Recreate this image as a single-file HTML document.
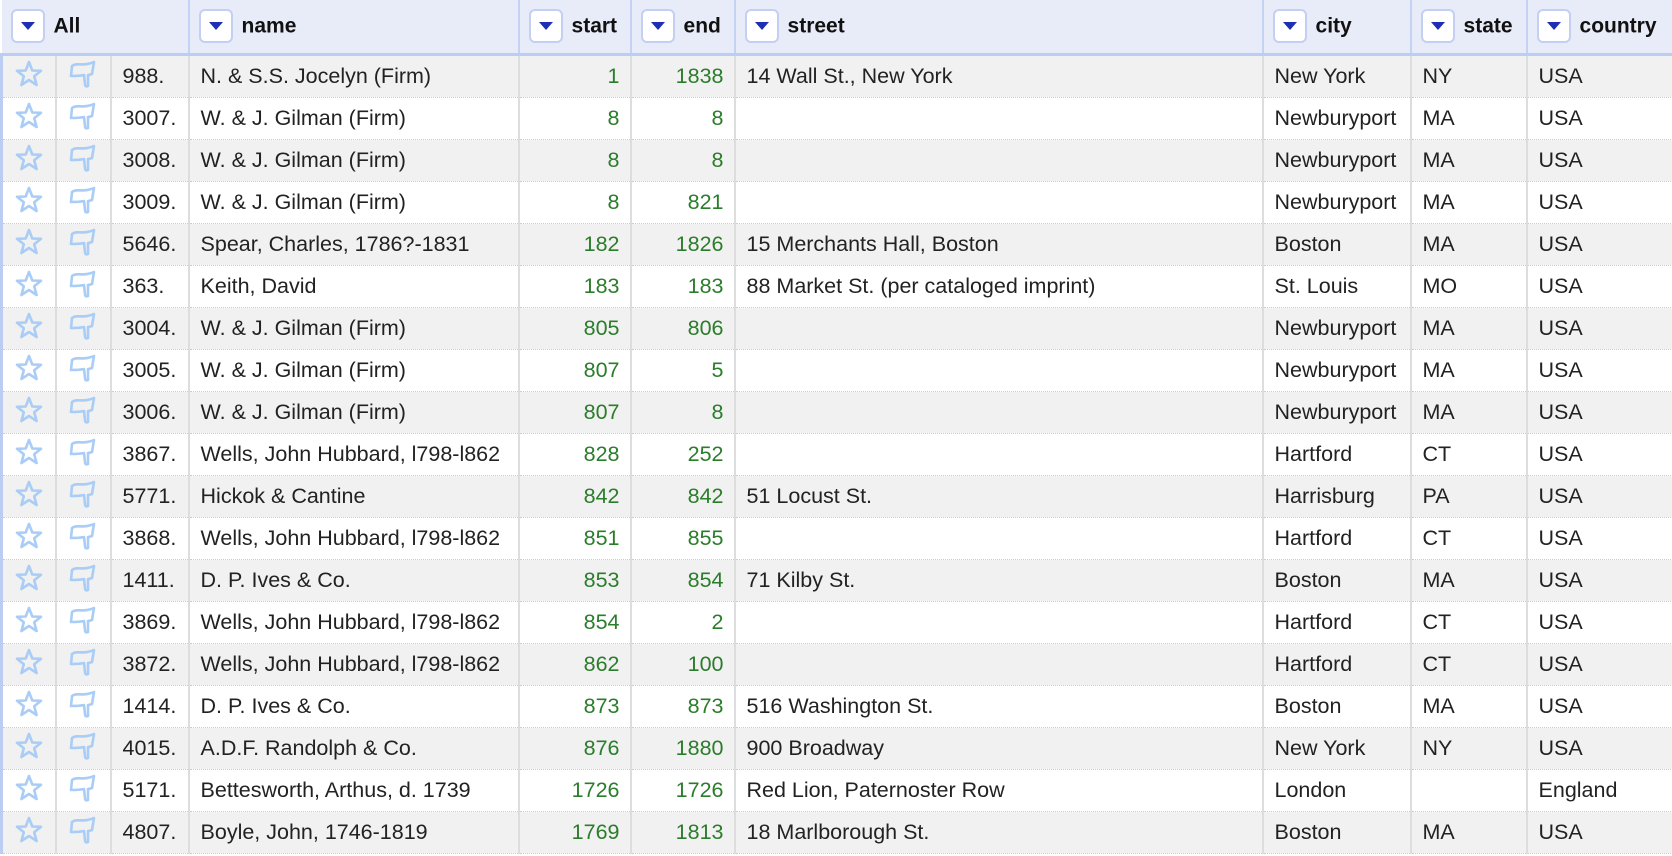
<!DOCTYPE html>
<html><head><meta charset="utf-8"><style>
html,body{margin:0;padding:0;background:#fff;width:1672px;height:856px;overflow:hidden}
body{font-family:"Liberation Sans",Arial,sans-serif;color:#222}
table{border-collapse:collapse;table-layout:fixed;width:1672px;position:absolute;left:0;top:0}
th{height:53px;background:#e8ebf8;border-right:2px solid #c4d2f4;border-bottom:3px solid #bccdf4;text-align:left;font-size:21px;font-weight:bold;padding:0;white-space:nowrap;color:#111}
th .b{display:inline-block;vertical-align:middle;width:30px;height:30px;margin:0 9px 0 9px;background:#fff;border:2px solid #c3d0f3;border-radius:6px;position:relative;top:-1px}
th .b:after{content:"";position:absolute;left:8px;top:11px;border-left:7px solid transparent;border-right:7px solid transparent;border-top:8px solid #1f2fb5}
td{height:41px;border-right:2px solid #ddd;border-bottom:1px dotted #ccc;font-size:21.5px;padding:0 10px 0 11px;white-space:nowrap;overflow:hidden}
tr.o td{background:#f1f1f1}
td.n{color:#2a7d2a;text-align:right;padding-right:10px}
td.i{padding:0;text-align:center}
td:first-child{border-left:3px solid #bccdf4}
</style></head><body>
<table>
<colgroup><col style="width:54px"><col style="width:55px"><col style="width:78px"><col style="width:330px"><col style="width:112px"><col style="width:104px"><col style="width:528px"><col style="width:148px"><col style="width:116px"><col style="width:147px"></colgroup>
<thead><tr><th colspan="3"><span class="b"></span>All</th><th><span class="b"></span>name</th><th><span class="b"></span>start</th><th><span class="b"></span>end</th><th><span class="b"></span>street</th><th><span class="b"></span>city</th><th><span class="b"></span>state</th><th><span class="b"></span>country</th></tr></thead>
<tbody id="tb"></tbody></table>
<script>
var S='<svg width="30" height="30" viewBox="0 0 30 30"><path d="M15 3 L18.3 11.5 L27 11.8 L20.2 17.3 L22.6 26 L15 21 L7.4 26 L9.8 17.3 L3 11.8 L11.7 11.5 Z" fill="none" stroke="#a9cdf6" stroke-width="2.6" stroke-linejoin="round"/></svg>';
var F='<svg width="32" height="32" viewBox="0 0 32 32"><path d="M5 8 C10 4 16 9 27 4 L25 16 C22 17 22 17 21 17 L21 28 C19 29 18 28 18 26 L17 17 C13 18 9 18 4 18 Z" fill="none" stroke="#a9cdf6" stroke-width="2.6" stroke-linejoin="round"/></svg>';
var R=[["988.","N. &amp; S.S. Jocelyn (Firm)","1","1838","14 Wall St., New York","New York","NY","USA"],
["3007.","W. &amp; J. Gilman (Firm)","8","8","","Newburyport","MA","USA"],
["3008.","W. &amp; J. Gilman (Firm)","8","8","","Newburyport","MA","USA"],
["3009.","W. &amp; J. Gilman (Firm)","8","821","","Newburyport","MA","USA"],
["5646.","Spear, Charles, 1786?-1831","182","1826","15 Merchants Hall, Boston","Boston","MA","USA"],
["363.","Keith, David","183","183","88 Market St. (per cataloged imprint)","St. Louis","MO","USA"],
["3004.","W. &amp; J. Gilman (Firm)","805","806","","Newburyport","MA","USA"],
["3005.","W. &amp; J. Gilman (Firm)","807","5","","Newburyport","MA","USA"],
["3006.","W. &amp; J. Gilman (Firm)","807","8","","Newburyport","MA","USA"],
["3867.","Wells, John Hubbard, l798-l862","828","252","","Hartford","CT","USA"],
["5771.","Hickok &amp; Cantine","842","842","51 Locust St.","Harrisburg","PA","USA"],
["3868.","Wells, John Hubbard, l798-l862","851","855","","Hartford","CT","USA"],
["1411.","D. P. Ives &amp; Co.","853","854","71 Kilby St.","Boston","MA","USA"],
["3869.","Wells, John Hubbard, l798-l862","854","2","","Hartford","CT","USA"],
["3872.","Wells, John Hubbard, l798-l862","862","100","","Hartford","CT","USA"],
["1414.","D. P. Ives &amp; Co.","873","873","516 Washington St.","Boston","MA","USA"],
["4015.","A.D.F. Randolph &amp; Co.","876","1880","900 Broadway","New York","NY","USA"],
["5171.","Bettesworth, Arthus, d. 1739","1726","1726","Red Lion, Paternoster Row","London","","England"],
["4807.","Boyle, John, 1746-1819","1769","1813","18 Marlborough St.","Boston","MA","USA"]];
var h="";R.forEach(function(r,k){h+='<tr class="'+(k%2?'':'o')+'"><td class="i">'+S+'</td><td class="i">'+F+'</td><td>'+r[0]+'</td><td>'+r[1]+'</td><td class="n">'+r[2]+'</td><td class="n">'+r[3]+'</td><td>'+r[4]+'</td><td>'+r[5]+'</td><td>'+r[6]+'</td><td>'+r[7]+'</td></tr>';});
document.getElementById("tb").innerHTML=h;
</script>
</body></html>
